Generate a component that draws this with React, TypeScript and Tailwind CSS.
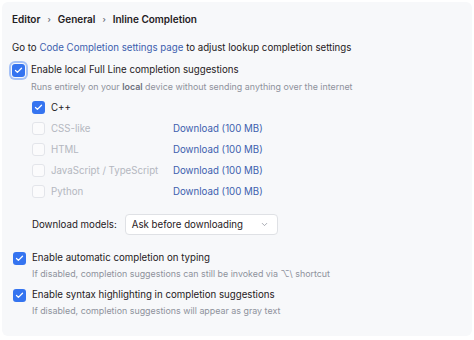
import { Check, ChevronDown } from "lucide-react";

function Box({ checked = false, disabled = false, focused = false }: { checked?: boolean; disabled?: boolean; focused?: boolean }) {
  if (checked) {
    return (
      <span className={`flex h-[13px] w-[13px] shrink-0 items-center justify-center rounded-[3px] bg-[#3574f0] ${focused ? "ring-2 ring-[#a6c2f7] ring-offset-[1px] ring-offset-[#f7f8fa]" : ""}`}>
        <Check size={9} strokeWidth={3.4} className="text-white" />
      </span>
    );
  }
  return <span className={`h-[13px] w-[13px] shrink-0 rounded-[3px] border ${disabled ? "border-[#e3e5ea] bg-[#fbfbfc]" : "border-[#c9ccd6] bg-white"}`} />;
}

function Lang({ name }: { name: string }) {
  return (
    <div className="flex h-[21px] items-center">
      <div className="flex w-[141px] items-center gap-[6px]">
        <Box disabled />
        <span className="text-[#b4b7c0]">{name}</span>
      </div>
      <span className="text-[#3d5fae]">Download (100 MB)</span>
    </div>
  );
}

function Option({ label, hint, className = "" }: { label: string; hint: string; className?: string }) {
  return (
    <div className={className}>
      <div className="flex h-[16px] items-center gap-[6px]">
        <Box checked />
        <span className="text-[#1f2023]">{label}</span>
      </div>
      <p className="mt-[2px] pl-[19px] text-[8.9px] leading-[12px] text-[#8e929c]">{hint}</p>
    </div>
  );
}

export default function App() {
  return (
    <div className="h-[340px] w-[474px] bg-white p-[2px] font-['Inter',sans-serif] text-[9.7px] leading-[14px]">
      <div className="h-[334px] rounded-md bg-[#f7f8fa] pl-[9px] pt-[10px]">
        <div className="flex h-[14px] items-center gap-[7px] pl-[1px] text-[10px] font-semibold text-[#1f2023]">
          <span>Editor</span>
          <span className="text-[8px] text-[#6c707e]">›</span>
          <span>General</span>
          <span className="text-[8px] text-[#6c707e]">›</span>
          <span>Inline Completion</span>
        </div>

        <p className="mt-[15px] pl-[1px] text-[#1f2023]">
          Go to <span className="text-[#3d5fae]">Code Completion settings page</span> to adjust lookup completion settings
        </p>

        <div className="mt-[7px] flex h-[16px] items-center gap-[6px] pl-[1px]">
          <Box checked focused />
          <span className="text-[#1f2023]">Enable local Full Line completion suggestions</span>
        </div>
        <p className="mt-[3px] pl-[20px] text-[8.9px] leading-[12px] text-[#8e929c]">
          Runs entirely on your <span className="font-semibold text-[#6c707e]">local</span> device without sending anything over the internet
        </p>

        <div className="mt-[4px] pl-[21px]">
          <div className="flex h-[21px] items-center gap-[6px]">
            <Box checked />
            <span className="text-[#1f2023]">C++</span>
          </div>
          <Lang name="CSS-like" />
          <Lang name="HTML" />
          <Lang name="JavaScript / TypeScript" />
          <Lang name="Python" />

          <div className="mt-[12px] flex items-center gap-[8px]">
            <span className="text-[#1f2023]">Download models:</span>
            <div className="flex h-[21px] w-[153px] items-center justify-between rounded-[4px] border border-[#dfe1e5] bg-white pl-[6px] pr-[8px] text-[#1f2023]">
              <span>Ask before downloading</span>
              <ChevronDown size={9} className="text-[#8e929c]" />
            </div>
          </div>
        </div>

        <Option className="mt-[15px] pl-[2px]" label="Enable automatic completion on typing" hint="If disabled, completion suggestions can still be invoked via ⌥\ shortcut" />
        <Option className="mt-[7px] pl-[2px]" label="Enable syntax highlighting in completion suggestions" hint="If disabled, completion suggestions will appear as gray text" />
      </div>
    </div>
  );
}
